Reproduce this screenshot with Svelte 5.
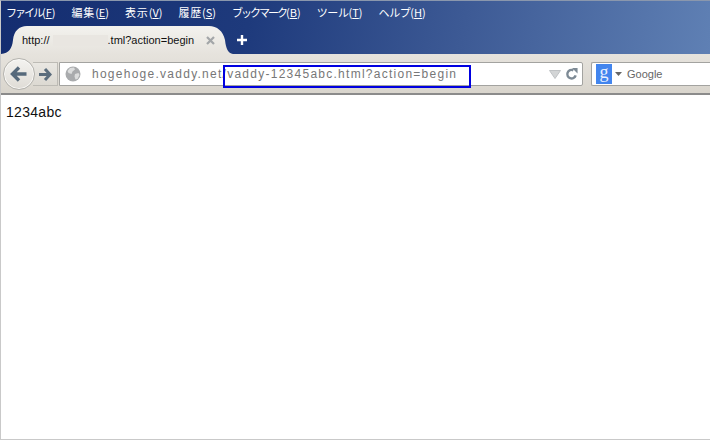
<script lang="ts">
	const menus = [
		{ label: 'ファイル', key: 'F', kind: 'kana' },
		{ label: '編集', key: 'E', kind: 'kanji' },
		{ label: '表示', key: 'V', kind: 'kanji' },
		{ label: '履歴', key: 'S', kind: 'kanji' },
		{ label: 'ブックマーク', key: 'B', kind: 'kana' },
		{ label: 'ツール', key: 'T', kind: 'short' },
		{ label: 'ヘルプ', key: 'H', kind: 'short' }
	];
</script>

<div class="window">
	<header class="chrome">
		<nav class="menubar">
			{#each menus as m}
				<span class="menu"><span class={m.kind}>{m.label}</span>(<u>{m.key}</u>)</span>
			{/each}
		</nav>
		<div class="tabstrip">
			<div class="tab">
				<svg class="tab-shape" width="232" height="28" viewBox="0 0 232 28">
					<defs>
						<linearGradient id="tabfill" x1="0" y1="0" x2="0" y2="1">
							<stop offset="0" stop-color="#f3f2ee" />
							<stop offset="1" stop-color="#e6e3dd" />
						</linearGradient>
					</defs>
					<path d="M0 28C8 27 11 23 12 14C13 5 18 0 26 0H208C216 0 222 5 224 14C225 23 227 27 232 28Z" fill="url(#tabfill)" />
				</svg>
				<span class="tab-title">http://<span class="blur"></span>.tml?action=begin</span>
				<svg class="tab-close" width="9" height="9" viewBox="0 0 9 9">
					<path d="M1 1l7 7M8 1l-7 7" stroke="#a3a6a8" stroke-width="2.2" />
				</svg>
			</div>
			<svg class="new-tab" width="12" height="12" viewBox="0 0 12 12">
				<path d="M6 1v10M1 6h10" stroke="#fff" stroke-width="2.4" />
			</svg>
		</div>
	</header>

	<div class="toolbar">
		<div class="nav-buttons">
			<button class="back" aria-label="back">
				<svg width="18" height="16" viewBox="0 0 18 16">
					<path d="M9 1.500L2.500 8 9 14.500M3 8h13.500" fill="none" stroke="#56697b" stroke-width="3.4" />
				</svg>
			</button>
			<button class="forward" aria-label="forward">
				<svg width="14" height="13" viewBox="0 0 14 13">
					<path d="M7 1l5 5.500-5 5.500M12 6.500H1" fill="none" stroke="#5b6d7d" stroke-width="3" />
				</svg>
			</button>
		</div>
		<div class="urlbar">
			<svg class="globe" width="16" height="16" viewBox="0 0 16 16">
				<circle cx="8" cy="8" r="7.500" fill="#a9abad" />
				<path d="M5 2l4-.5 1 2-2.500 2-1 2.500-3-1-1-2zM10 8l3.500-1 1 2-2 4-2 .5-1-3z" fill="#dcdddd" />
			</svg>
			<span class="url">hogehoge.vaddy.net/vaddy-12345abc.html?action=begin</span>
			<span class="highlight"></span>
			<svg class="drop" width="12" height="9" viewBox="0 0 12 9">
				<path d="M0.500 0.500h11L6 8.500z" fill="#d3d5d6" stroke="#bfc2c4" />
			</svg>
			<svg class="reload" width="13" height="14" viewBox="0 0 14 14">
				<path d="M11.500 8.500A4.600 4.600 0 1 1 9 3" fill="none" stroke="#7d8a95" stroke-width="2.600" />
				<path d="M7.500 0.500L13.500 0.500 13.500 6.500z" fill="#7d8a95" />
			</svg>
		</div>
		<div class="searchbar">
			<span class="engine"><span class="g">g</span></span>
			<svg class="engine-drop" width="7" height="4" viewBox="0 0 7 4">
				<path d="M0 0h7L3.500 4z" fill="#666" />
			</svg>
			<span class="engine-name">Google</span>
		</div>
	</div>

	<main class="page">1234abc</main>
</div>

<style>
	:global(body) {
		margin: 0;
	}
	.window {
		box-sizing: border-box;
		width: 710px;
		height: 440px;
		display: flex;
		flex-direction: column;
		background: #fff;
		border: 1px solid #c9c9c9;
		border-top-color: #8a97ad;
		border-right: none;
		overflow: hidden;
	}
	.chrome {
		height: 53px;
		flex-shrink: 0;
		background: linear-gradient(100deg, #142d70 0%, #1e3a7c 35%, #3d5a95 65%, #5f80b4 100%);
	}
	.menubar {
		display: flex;
		height: 23px;
		align-items: center;
		gap: 16px;
		padding-left: 5px;
		font: 11px/1 "Noto Sans CJK JP", sans-serif;
		color: #fff;
	}
	.menu {
		white-space: nowrap;
	}
	.kana {
		letter-spacing: -2px;
	}
	.short {
		letter-spacing: -0.4px;
	}
	.kanji {
		letter-spacing: 0.8px;
	}
	.menu u {
		text-underline-offset: 1px;
	}
	.tabstrip {
		display: flex;
		align-items: flex-end;
		height: 30px;
	}
	.tab {
		position: relative;
		box-sizing: border-box;
		width: 232px;
		height: 28px;
		padding: 1px 18px 0 21px;
		display: flex;
		align-items: center;
		justify-content: space-between;
	}
	.tab-shape {
		position: absolute;
		left: 0;
		top: 0;
	}
	.tab-title,
	.tab-close {
		position: relative;
	}
	.tab-title {
		display: flex;
		align-items: center;
		font: 11px/1 "Liberation Sans", sans-serif;
		color: #111;
		white-space: nowrap;
	}
	.blur {
		width: 55px;
		height: 11px;
		margin-left: 3px;
		background: #e9e6e1;
	}
	.new-tab {
		margin: 0 0 8px 3px;
	}
	.toolbar {
		box-sizing: border-box;
		height: 41px;
		flex-shrink: 0;
		display: flex;
		align-items: center;
		padding: 1px 0 0 2px;
		background: linear-gradient(#e6e3dd, #d9d5cd);
		border-bottom: 2px solid #8b8b8b;
	}
	.nav-buttons {
		display: flex;
		align-items: center;
		width: 56px;
		flex-shrink: 0;
	}
	button {
		padding: 0;
		display: flex;
		align-items: center;
		justify-content: center;
	}
	.back {
		position: relative;
		z-index: 1;
		width: 32px;
		height: 32px;
		flex-shrink: 0;
		border-radius: 50%;
		border: 1px solid #b4b3ae;
		background: linear-gradient(#f4f3f0, #dfdcd6);
		box-shadow: inset 0 0 0 1px #fbfaf8;
	}
	.forward {
		width: 25px;
		height: 24px;
		margin-left: -2px;
		border: 1px solid #bdbbb5;
		border-left: none;
		background: linear-gradient(#e9e7e2, #dcd9d2);
	}
	.urlbar {
		position: relative;
		box-sizing: border-box;
		width: 524px;
		height: 24px;
		margin-right: 8px;
		flex-shrink: 0;
		display: flex;
		align-items: center;
		background: #fff;
		border: 1px solid #a3a3a0;
		border-radius: 0 2px 2px 0;
	}
	.globe {
		margin-left: 5px;
		flex-shrink: 0;
	}
	.url {
		margin-left: 11px;
		font: 12px/1 "Liberation Sans", sans-serif;
		letter-spacing: 1.26px;
		color: #777;
		white-space: nowrap;
	}
	.highlight {
		position: absolute;
		left: 163px;
		top: 2px;
		width: 248px;
		height: 23px;
		box-sizing: border-box;
		border: 2px solid #0000e0;
	}
	.drop {
		position: absolute;
		left: 489px;
		top: 7px;
	}
	.reload {
		position: absolute;
		left: 505px;
		top: 4px;
	}
	.searchbar {
		box-sizing: border-box;
		flex: 1;
		height: 24px;
		display: flex;
		align-items: center;
		background: #fff;
		border: 1px solid #a3a3a0;
		border-right: none;
		border-radius: 2px 0 0 2px;
	}
	.engine {
		width: 16px;
		height: 20px;
		margin-left: 4px;
		display: flex;
		align-items: center;
		justify-content: center;
		background: #4285ee;
	}
	.g {
		font: 18px/1 "Liberation Serif", serif;
		color: #e8f0ff;
		margin-top: -5px;
	}
	.engine-drop {
		margin-left: 3px;
	}
	.engine-name {
		margin-left: 5px;
		font: 11px/1 "Liberation Sans", sans-serif;
		color: #666;
	}
	.page {
		flex: 1;
		padding: 9px 5px;
		font: 14px/1.2 "Liberation Sans", sans-serif;
		letter-spacing: 0.3px;
		color: #111;
	}
</style>
